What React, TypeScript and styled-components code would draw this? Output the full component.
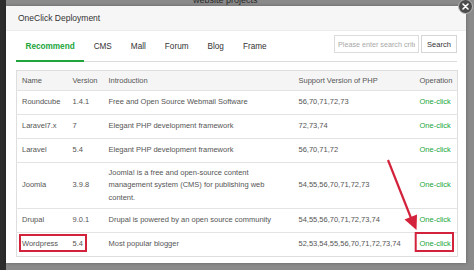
import React from "react";
import styled, { createGlobalStyle } from "styled-components";

const GlobalStyle = createGlobalStyle`
  html, body { margin: 0; padding: 0; }
  body { font-family: "Liberation Sans", Arial, sans-serif; }
`;

const GREEN = "#20a53a";
const RED = "#d3223b";

const Screen = styled.div`
  position: relative;
  width: 474px;
  height: 270px;
  overflow: hidden;
  display: grid;
  grid-template-columns: 6px 1fr;
`;

const LeftRail = styled.div`
  background: #2c2c2c;
`;

const PageBehind = styled.div`
  background: #8a8a8a;
  display: flex;
  flex-direction: column;
`;

const BehindText = styled.div`
  margin-top: -5px;
  padding-left: 187px;
  font-size: 9px;
  line-height: 11px;
  color: #2a2a2a;
`;

const Dialog = styled.div`
  position: absolute;
  left: 6px;
  top: 6px;
  width: 460px;
  height: 257px;
  background: #fff;
  display: flex;
  flex-direction: column;
  box-shadow: 0 0 3px rgba(0, 0, 0, 0.3);
`;

const DialogHeader = styled.div`
  height: 25px;
  flex: none;
  display: flex;
  align-items: center;
  padding-left: 12px;
  background: #f6f6f6;
  border-bottom: 1px solid #ececec;
  box-sizing: border-box;
  font-size: 8.5px;
  color: #333;
`;

const CloseButton = styled.div`
  position: absolute;
  right: -7px;
  top: -7px;
  width: 15px;
  height: 15px;
  border-radius: 50%;
  background: #4b4b4b;
  border: 1px solid #bdbdbd;
  box-sizing: border-box;
  display: flex;
  align-items: center;
  justify-content: center;
`;

const Body = styled.div`
  padding: 0 9px 0 10px;
  display: flex;
  flex-direction: column;
`;

const TabBar = styled.div`
  height: 31px;
  display: flex;
  align-items: stretch;
  border-bottom: 1px solid #dcdcdc;
  box-sizing: border-box;
`;

const Tab = styled.div<{ $active?: boolean }>`
  display: flex;
  align-items: center;
  padding: 2px 9.5px 0;
  font-size: 8.2px;
  font-weight: ${(p) => (p.$active ? 700 : 400)};
  color: ${(p) => (p.$active ? GREEN : "#333")};
  border-bottom: 2px solid ${(p) => (p.$active ? GREEN : "transparent")};
  margin-bottom: -1px;
`;

const Spacer = styled.div`
  flex: 1;
`;

const SearchGroup = styled.div`
  display: flex;
  align-items: center;
  gap: 2px;
  padding-bottom: 4px;
`;

const SearchInput = styled.input`
  width: 85px;
  height: 18px;
  box-sizing: border-box;
  border: 1px solid #dcdcdc;
  padding: 0 3px;
  font-family: "Liberation Sans", Arial, sans-serif;
  font-size: 7.2px;
  color: #333;
  outline: none;
  &::placeholder { color: #a8a8a8; }
`;

const SearchButton = styled.button`
  width: 36px;
  height: 18px;
  box-sizing: border-box;
  border: 1px solid #d6d6d6;
  background: #fff;
  padding: 0;
  font-family: "Liberation Sans", Arial, sans-serif;
  font-size: 7.5px;
  color: #333;
`;

const Table = styled.table`
  margin-top: 8px;
  width: 441px;
  border-collapse: collapse;
  table-layout: fixed;
  border: 1px solid #dedede;
  font-size: 7.5px;
  color: #555;
`;

const HeadCell = styled.th`
  height: 20px;
  padding: 0 5px;
  text-align: left;
  font-weight: 400;
  background: #f5f5f5;
  color: #555;
  box-sizing: border-box;
`;

const Row = styled.tr`
  border-top: 1px solid #e4e4e4;
`;

const Cell = styled.td<{ $green?: boolean }>`
  height: 24px;
  padding: 3.5px 5px;
  line-height: 12.5px;
  vertical-align: middle;
  box-sizing: border-box;
  color: ${(p) => (p.$green ? GREEN : "#555")};
`;

const Overlay = styled.svg`
  position: absolute;
  left: 0;
  top: 0;
  pointer-events: none;
`;

const tabs = ["Recommend", "CMS", "Mall", "Forum", "Blog", "Frame"];

const rows = [
  ["Roundcube", "1.4.1", "Free and Open Source Webmail Software", "56,70,71,72,73"],
  ["Laravel7.x", "7", "Elegant PHP development framework", "72,73,74"],
  ["Laravel", "5.4", "Elegant PHP development framework", "56,70,71,72"],
  [
    "Joomla",
    "3.9.8",
    "Joomla! is a free and open-source content management system (CMS) for publishing web content.",
    "54,55,56,70,71,72,73",
  ],
  ["Drupal", "9.0.1", "Drupal is powered by an open source community", "54,55,56,70,71,72,73,74"],
  ["Wordpress", "5.4", "Most popular blogger", "52,53,54,55,56,70,71,72,73,74"],
];

export default function App() {
  return (
    <>
      <GlobalStyle />
      <Screen>
        <LeftRail />
        <PageBehind>
          <BehindText>website projects</BehindText>
        </PageBehind>
        <Dialog>
          <DialogHeader>OneClick Deployment</DialogHeader>
          <CloseButton>
            <svg width="7" height="7" viewBox="0 0 7 7">
              <path d="M1 1L6 6M6 1L1 6" stroke="#fff" strokeWidth="1.6" strokeLinecap="round" />
            </svg>
          </CloseButton>
          <Body>
            <TabBar>
              {tabs.map((t, i) => (
                <Tab key={t} $active={i === 0}>
                  {t}
                </Tab>
              ))}
              <Spacer />
              <SearchGroup>
                <SearchInput placeholder="Please enter search criteria" />
                <SearchButton>Search</SearchButton>
              </SearchGroup>
            </TabBar>
            <Table>
              <colgroup>
                <col style={{ width: 51 }} />
                <col style={{ width: 36 }} />
                <col style={{ width: 190 }} />
                <col style={{ width: 121 }} />
                <col style={{ width: 43 }} />
              </colgroup>
              <thead>
                <tr>
                  <HeadCell>Name</HeadCell>
                  <HeadCell>Version</HeadCell>
                  <HeadCell>Introduction</HeadCell>
                  <HeadCell>Support Version of PHP</HeadCell>
                  <HeadCell>Operation</HeadCell>
                </tr>
              </thead>
              <tbody>
                {rows.map((r) => (
                  <Row key={r[0]}>
                    <Cell>{r[0]}</Cell>
                    <Cell>{r[1]}</Cell>
                    <Cell>{r[2]}</Cell>
                    <Cell>{r[3]}</Cell>
                    <Cell $green>One-click</Cell>
                  </Row>
                ))}
              </tbody>
            </Table>
          </Body>
        </Dialog>
        <Overlay width="474" height="270" viewBox="0 0 474 270">
          <rect x="20" y="235" width="66" height="16" fill="none" stroke={RED} strokeWidth="2" />
          <rect x="415.7" y="233" width="37.3" height="18" fill="none" stroke={RED} strokeWidth="2" />
          <line x1="388" y1="160" x2="411" y2="218" stroke={RED} strokeWidth="2.2" />
          <polygon points="416.5,230 404.5,219.5 417,214.5" fill={RED} />
        </Overlay>
      </Screen>
    </>
  );
}
